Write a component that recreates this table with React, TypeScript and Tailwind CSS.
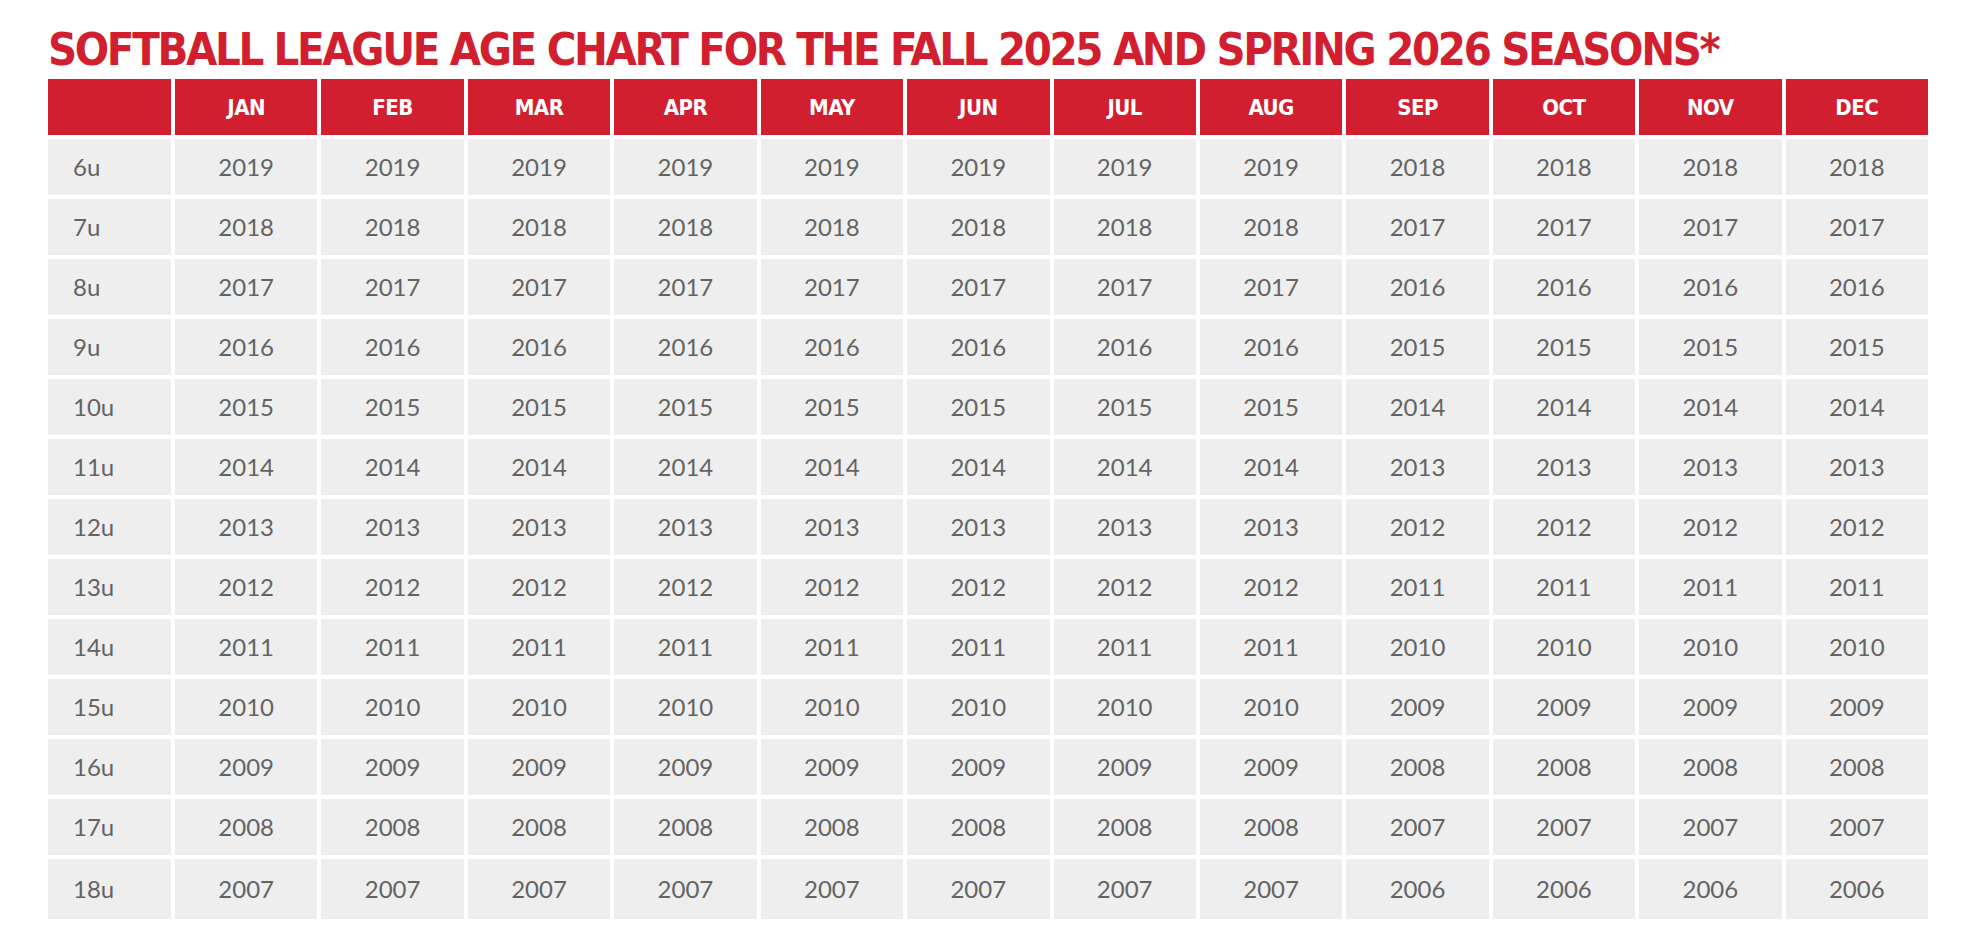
import React from "react";

const months = ["JAN","FEB","MAR","APR","MAY","JUN","JUL","AUG","SEP","OCT","NOV","DEC"];
const ages = [6,7,8,9,10,11,12,13,14,15,16,17,18];

export default function App() {
  return (
    <div className="w-[1968px] h-[948px] bg-white overflow-hidden">
      <div className="pl-[48px] pt-[22px] w-[1928px]">
        <h1
          className="text-[#d21f30] font-bold text-[45px] leading-[56px] whitespace-nowrap tracking-[-2.35px]"
          style={{ fontFamily: '"DejaVu Sans Condensed", "Liberation Sans", sans-serif' }}
        >
          SOFTBALL LEAGUE AGE CHART FOR THE FALL 2025 AND SPRING 2026 SEASONS*
        </h1>
        <div className="mt-[1px] grid grid-cols-[123px_repeat(12,1fr)] gap-[4px] w-[1880px]">
          <div className="bg-[#d21f30] h-[56px]" />
          {months.map((m) => (
            <div
              key={m}
              className="bg-[#d21f30] h-[56px] flex items-center justify-center text-white font-bold text-[22px] tracking-[-0.5px]"
              style={{ fontFamily: '"DejaVu Sans Condensed", "Liberation Sans", sans-serif' }}
            >
              {m}
            </div>
          ))}
          {ages.map((a, i) => {
            const h = i === ages.length - 1 ? "h-[60px]" : "h-[56px]";
            return (
              <React.Fragment key={a}>
                <div
                  className={`bg-[#eeeeee] ${h} flex items-center pl-[25px] text-[#636363] text-[24px]`}
                  style={{ fontFamily: 'Lato, "Open Sans", sans-serif' }}
                >
                  {a}u
                </div>
                {months.map((m, j) => (
                  <div
                    key={m}
                    className={`bg-[#eeeeee] ${h} flex items-center justify-center text-[#636363] text-[24px]`}
                    style={{ fontFamily: 'Lato, "Open Sans", sans-serif' }}
                  >
                    {2025 - a - (j >= 8 ? 1 : 0)}
                  </div>
                ))}
              </React.Fragment>
            );
          })}
        </div>
      </div>
    </div>
  );
}
